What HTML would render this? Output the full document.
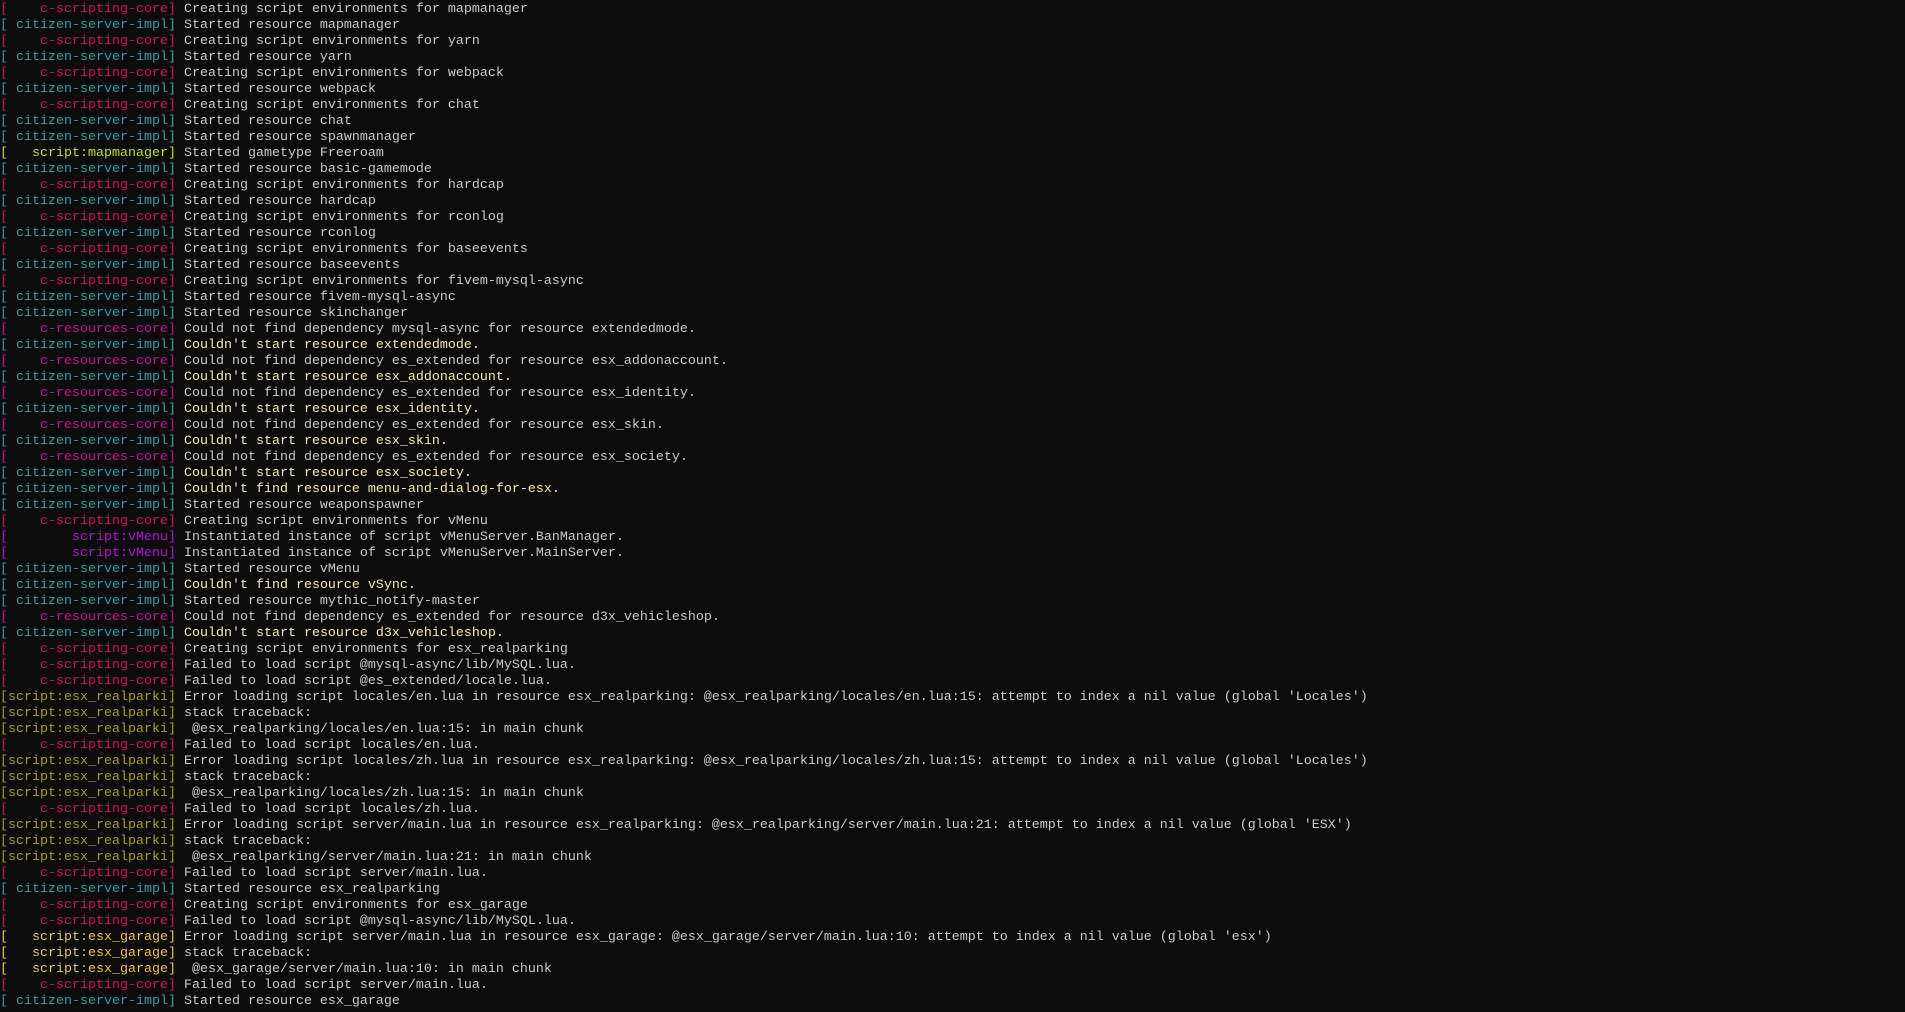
<!DOCTYPE html>
<html><head><meta charset="utf-8"><style>
html,body{margin:0;padding:0;background:#0c0c0c;width:1905px;height:1012px;overflow:hidden}
pre{margin:0;padding:2px 0 0 0;font-family:"Liberation Mono",monospace;font-size:13.33px;line-height:16px;color:#cccccc;white-space:pre}
.r{color:#d81458}.m{color:#c81496}.c{color:#3a9ea6}.g{color:#c0e010}.p{color:#b414d8}.o{color:#a8a010}.y{color:#f0c830}.w{color:#f7eea0}
</style></head><body><pre><span class="r">[    c-scripting-core]</span> Creating script environments for mapmanager
<span class="c">[ citizen-server-impl]</span> Started resource mapmanager
<span class="r">[    c-scripting-core]</span> Creating script environments for yarn
<span class="c">[ citizen-server-impl]</span> Started resource yarn
<span class="r">[    c-scripting-core]</span> Creating script environments for webpack
<span class="c">[ citizen-server-impl]</span> Started resource webpack
<span class="r">[    c-scripting-core]</span> Creating script environments for chat
<span class="c">[ citizen-server-impl]</span> Started resource chat
<span class="c">[ citizen-server-impl]</span> Started resource spawnmanager
<span class="g">[   script:mapmanager]</span> Started gametype Freeroam
<span class="c">[ citizen-server-impl]</span> Started resource basic-gamemode
<span class="r">[    c-scripting-core]</span> Creating script environments for hardcap
<span class="c">[ citizen-server-impl]</span> Started resource hardcap
<span class="r">[    c-scripting-core]</span> Creating script environments for rconlog
<span class="c">[ citizen-server-impl]</span> Started resource rconlog
<span class="r">[    c-scripting-core]</span> Creating script environments for baseevents
<span class="c">[ citizen-server-impl]</span> Started resource baseevents
<span class="r">[    c-scripting-core]</span> Creating script environments for fivem-mysql-async
<span class="c">[ citizen-server-impl]</span> Started resource fivem-mysql-async
<span class="c">[ citizen-server-impl]</span> Started resource skinchanger
<span class="m">[    c-resources-core]</span> Could not find dependency mysql-async for resource extendedmode.
<span class="c">[ citizen-server-impl]</span> <span class="w">Couldn't start resource extendedmode.</span>
<span class="m">[    c-resources-core]</span> Could not find dependency es_extended for resource esx_addonaccount.
<span class="c">[ citizen-server-impl]</span> <span class="w">Couldn't start resource esx_addonaccount.</span>
<span class="m">[    c-resources-core]</span> Could not find dependency es_extended for resource esx_identity.
<span class="c">[ citizen-server-impl]</span> <span class="w">Couldn't start resource esx_identity.</span>
<span class="m">[    c-resources-core]</span> Could not find dependency es_extended for resource esx_skin.
<span class="c">[ citizen-server-impl]</span> <span class="w">Couldn't start resource esx_skin.</span>
<span class="m">[    c-resources-core]</span> Could not find dependency es_extended for resource esx_society.
<span class="c">[ citizen-server-impl]</span> <span class="w">Couldn't start resource esx_society.</span>
<span class="c">[ citizen-server-impl]</span> <span class="w">Couldn't find resource menu-and-dialog-for-esx.</span>
<span class="c">[ citizen-server-impl]</span> Started resource weaponspawner
<span class="r">[    c-scripting-core]</span> Creating script environments for vMenu
<span class="p">[        script:vMenu]</span> Instantiated instance of script vMenuServer.BanManager.
<span class="p">[        script:vMenu]</span> Instantiated instance of script vMenuServer.MainServer.
<span class="c">[ citizen-server-impl]</span> Started resource vMenu
<span class="c">[ citizen-server-impl]</span> <span class="w">Couldn't find resource vSync.</span>
<span class="c">[ citizen-server-impl]</span> Started resource mythic_notify-master
<span class="m">[    c-resources-core]</span> Could not find dependency es_extended for resource d3x_vehicleshop.
<span class="c">[ citizen-server-impl]</span> <span class="w">Couldn't start resource d3x_vehicleshop.</span>
<span class="r">[    c-scripting-core]</span> Creating script environments for esx_realparking
<span class="r">[    c-scripting-core]</span> Failed to load script @mysql-async/lib/MySQL.lua.
<span class="r">[    c-scripting-core]</span> Failed to load script @es_extended/locale.lua.
<span class="o">[script:esx_realparki]</span> Error loading script locales/en.lua in resource esx_realparking: @esx_realparking/locales/en.lua:15: attempt to index a nil value (global 'Locales')
<span class="o">[script:esx_realparki]</span> stack traceback:
<span class="o">[script:esx_realparki]</span>  @esx_realparking/locales/en.lua:15: in main chunk
<span class="r">[    c-scripting-core]</span> Failed to load script locales/en.lua.
<span class="o">[script:esx_realparki]</span> Error loading script locales/zh.lua in resource esx_realparking: @esx_realparking/locales/zh.lua:15: attempt to index a nil value (global 'Locales')
<span class="o">[script:esx_realparki]</span> stack traceback:
<span class="o">[script:esx_realparki]</span>  @esx_realparking/locales/zh.lua:15: in main chunk
<span class="r">[    c-scripting-core]</span> Failed to load script locales/zh.lua.
<span class="o">[script:esx_realparki]</span> Error loading script server/main.lua in resource esx_realparking: @esx_realparking/server/main.lua:21: attempt to index a nil value (global 'ESX')
<span class="o">[script:esx_realparki]</span> stack traceback:
<span class="o">[script:esx_realparki]</span>  @esx_realparking/server/main.lua:21: in main chunk
<span class="r">[    c-scripting-core]</span> Failed to load script server/main.lua.
<span class="c">[ citizen-server-impl]</span> Started resource esx_realparking
<span class="r">[    c-scripting-core]</span> Creating script environments for esx_garage
<span class="r">[    c-scripting-core]</span> Failed to load script @mysql-async/lib/MySQL.lua.
<span class="y">[   script:esx_garage]</span> Error loading script server/main.lua in resource esx_garage: @esx_garage/server/main.lua:10: attempt to index a nil value (global 'esx')
<span class="y">[   script:esx_garage]</span> stack traceback:
<span class="y">[   script:esx_garage]</span>  @esx_garage/server/main.lua:10: in main chunk
<span class="r">[    c-scripting-core]</span> Failed to load script server/main.lua.
<span class="c">[ citizen-server-impl]</span> Started resource esx_garage</pre></body></html>
